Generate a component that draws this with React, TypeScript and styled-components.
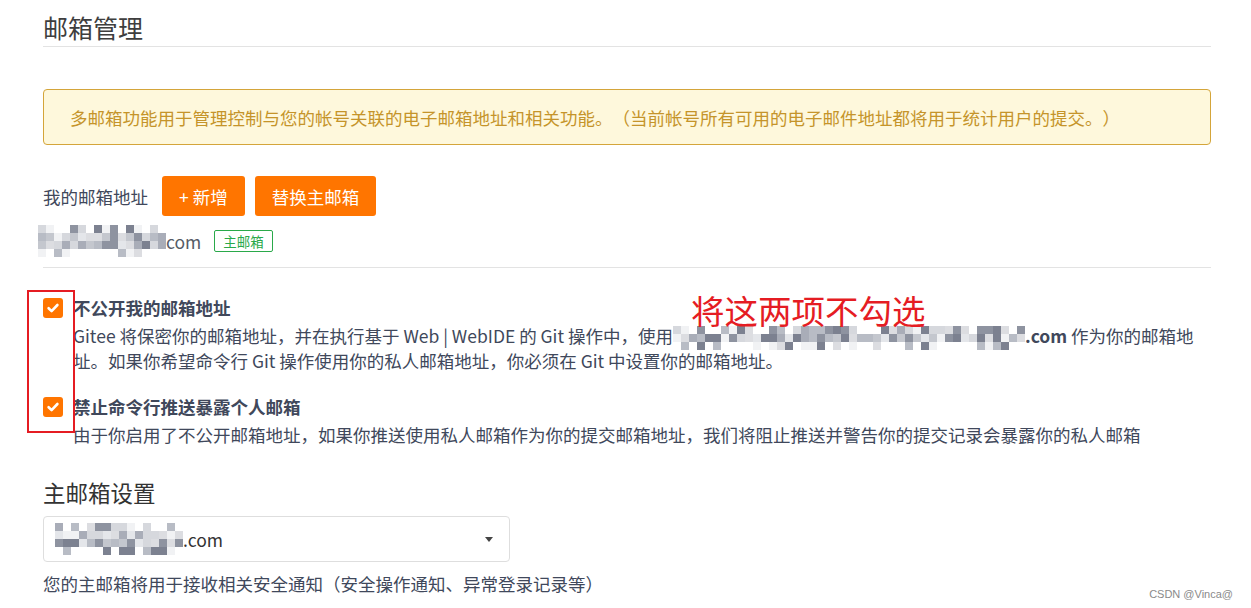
import React from "react"
import styled, { createGlobalStyle } from "styled-components"

const GlobalStyle = createGlobalStyle`
  html, body {
    margin: 0;
    padding: 0;
    background: #fff;
  }
  body {
    font-family: "Noto Sans CJK SC", "Noto Sans", sans-serif;
    color: #40485b;
    text-spacing-trim: space-all;
  }
`

// pseudo random mosaic used to hide the addresses
const shades = ["#e4e6ea", "#c4c7ce", "#a9adb8", "#8e93a0", "#d6d8dd", "#f1f2f4", "#b8bcc5", "#7c8190", "#dcdde1"]

type MosaicProps = {
  cols: number
  rows: number
  seed: number
  cell?: number
}

const Mosaic = ({ cols, rows, seed, cell = 8 }: MosaicProps) => {
  const rects = []
  let s = seed
  for (let r = 0; r < rows; r++) {
    for (let c = 0; c < cols; c++) {
      s = (s * 9301 + 49297) % 233280
      const v = s / 233280
      if (r === rows - 1 && v < 0.55) continue
      if (r === 0 && v < 0.3) continue
      rects.push(
        <rect key={r + "-" + c} x={c * cell} y={r * cell} width={cell} height={cell}
          fill={shades[Math.floor(v * shades.length)]} />
      )
    }
  }
  return (
    <MosaicSvg width={cols * cell} height={rows * cell} viewBox={`0 0 ${cols * cell} ${rows * cell}`}>
      {rects}
    </MosaicSvg>
  )
}

const App = () => {
  return (
    <Page>
      <GlobalStyle />
      <Title>邮箱管理</Title>

      <Notice>
        多邮箱功能用于管理控制与您的帐号关联的电子邮箱地址和相关功能。（当前帐号所有可用的电子邮件地址都将用于统计用户的提交。）
      </Notice>

      <AddressBar>
        <Label>我的邮箱地址</Label>
        <OrangeButton>+ 新增</OrangeButton>
        <OrangeButton>替换主邮箱</OrangeButton>
      </AddressBar>

      <EmailRow>
        <Mosaic cols={16} rows={4} seed={7} cell={8} />
        <span>com</span>
        <PrimaryTag>主邮箱</PrimaryTag>
      </EmailRow>

      <Divider />

      <Options>
        <Annotation />
        <AnnotationText>将这两项不勾选</AnnotationText>
        <Option>
          <Check><CheckMark /></Check>
          <OptionBody>
            <OptionTitle>不公开我的邮箱地址</OptionTitle>
            <OptionText>
              Gitee 将保密你的邮箱地址，并在执行基于 Web | WebIDE 的 Git 操作中，使用
              <Mosaic cols={44} rows={3} seed={31} cell={8} />
              <strong>.com</strong> 作为你的邮箱地<br />
              址。如果你希望命令行 Git 操作使用你的私人邮箱地址，你必须在 Git 中设置你的邮箱地址。
            </OptionText>
          </OptionBody>
        </Option>
        <Option>
          <Check><CheckMark /></Check>
          <OptionBody>
            <OptionTitle>禁止命令行推送暴露个人邮箱</OptionTitle>
            <OptionText>
              由于你启用了不公开邮箱地址，如果你推送使用私人邮箱作为你的提交邮箱地址，我们将阻止推送并警告你的提交记录会暴露你的私人邮箱
            </OptionText>
          </OptionBody>
        </Option>
      </Options>

      <SubTitle>主邮箱设置</SubTitle>
      <Select>
        <SelectValue>
          <Mosaic cols={16} rows={4} seed={53} cell={8} />
          <span>.com</span>
        </SelectValue>
        <Caret />
      </Select>
      <Hint>您的主邮箱将用于接收相关安全通知（安全操作通知、异常登录记录等）</Hint>

      <Watermark>CSDN @Vinca@</Watermark>
    </Page>
  )
}

const CheckMark = () => (
  <svg width="14" height="14" viewBox="0 0 14 14">
    <path d="M2.6 7.2 L5.6 10.1 L11.4 4" fill="none" stroke="#fff" strokeWidth="2.6" strokeLinecap="round" strokeLinejoin="round" />
  </svg>
)

export default App

const Page = styled.div`
  position: relative;
  width: 1168px;
  height: 608px;
  padding: 0 40px 0 43px;
  overflow: hidden;
  font-size: 17.5px;
`

const MosaicSvg = styled.svg`
  display: inline-block;
  vertical-align: middle;
`

const Title = styled.h1`
  margin: 0;
  padding-top: 9px;
  height: 37px;
  font-size: 25px;
  font-weight: 400;
  line-height: 37px;
  color: #3e3e3e;
  border-bottom: 1px solid #e3e3e3;
`

const Notice = styled.div`
  margin-top: 42px;
  height: 56px;
  box-sizing: border-box;
  padding: 0 26px;
  display: flex;
  align-items: center;
  background: #fef8dc;
  border: 1px solid #d4a53a;
  border-radius: 4px;
  color: #c5942a;
  font-size: 17.5px;
  white-space: nowrap;
`

const AddressBar = styled.div`
  margin-top: 31px;
  display: flex;
  align-items: center;
  gap: 10px;
`

const Label = styled.span`
  margin-right: 4px;
  color: #40485b;
`

const OrangeButton = styled.button`
  height: 40px;
  padding: 0 17px;
  border: none;
  border-radius: 3px;
  background: #ff7500;
  color: #fff;
  font-family: inherit;
  font-size: 17.5px;
`

const EmailRow = styled.div`
  margin-top: 10px;
  margin-left: -5px;
  height: 30px;
  display: flex;
  align-items: center;
  color: #555b66;

  & > span {
    margin-right: 13px;
  }
`

const PrimaryTag = styled.span`
  display: inline-flex;
  align-items: center;
  height: 20px;
  padding: 0 8px;
  border: 1px solid #2aa94a;
  border-radius: 2px;
  color: #2aa94a;
  font-size: 13.5px;
`

const Divider = styled.div`
  margin-top: 11px;
  border-top: 1px solid #e3e3e3;
`

const Options = styled.div`
  position: relative;
  margin-top: 28px;
  display: flex;
  flex-direction: column;
  gap: 23px;
`

const Annotation = styled.div`
  position: absolute;
  left: -16px;
  top: -6px;
  width: 44px;
  height: 139px;
  border: 2px solid #e51c23;
`

const AnnotationText = styled.div`
  position: absolute;
  left: 648px;
  top: -8px;
  font-size: 33.5px;
  line-height: 44px;
  color: #e51c23;
`

const Option = styled.div`
  display: flex;
  gap: 10px;
`

const Check = styled.span`
  flex: none;
  width: 20px;
  height: 20px;
  margin-top: 2px;
  border-radius: 3px;
  background: #ff7500;
  display: flex;
  align-items: center;
  justify-content: center;
`

const OptionBody = styled.div`
  display: flex;
  flex-direction: column;
`

const OptionTitle = styled.div`
  font-weight: 700;
  line-height: 24px;
  color: #40485b;
`

const OptionText = styled.div`
  margin-top: 5px;
  line-height: 22px;
  color: #40485b;
  white-space: nowrap;

  strong {
    font-weight: 700;
  }
`

const SubTitle = styled.h2`
  margin: 31px 0 0;
  font-size: 22.5px;
  font-weight: 400;
  line-height: 30px;
  color: #333;
`

const Select = styled.div`
  margin-top: 9px;
  width: 467px;
  height: 46px;
  box-sizing: border-box;
  padding: 0 16px 0 11px;
  display: flex;
  align-items: center;
  justify-content: space-between;
  border: 1px solid #dedede;
  border-radius: 4px;
`

const SelectValue = styled.div`
  display: flex;
  align-items: center;
  color: #333;
`

const Caret = styled.span`
  width: 0;
  height: 0;
  border-left: 4px solid transparent;
  border-right: 4px solid transparent;
  border-top: 5px solid #444;
`

const Hint = styled.div`
  margin-top: 9px;
  color: #40485b;
`

const Watermark = styled.div`
  position: absolute;
  right: 18px;
  bottom: 8px;
  font-family: "Liberation Sans", sans-serif;
  font-size: 11px;
  color: #8a8a8a;
`
